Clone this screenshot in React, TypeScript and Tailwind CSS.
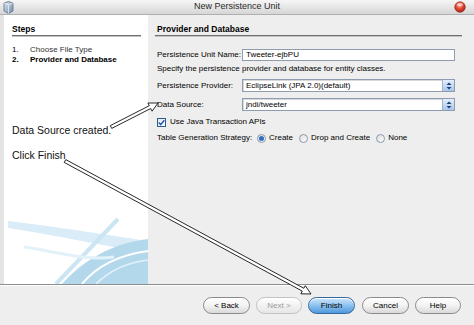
import React from "react";

type Pt = [number, number];

// Outline ("hollow") arrow polygon from tail to tip
function hollowArrow(tail: Pt, tip: Pt, sh = 1.6, hh = 4.6, hl = 9): string {
  const dx = tip[0] - tail[0];
  const dy = tip[1] - tail[1];
  const len = Math.hypot(dx, dy);
  const ux = dx / len;
  const uy = dy / len;
  const nx = -uy;
  const ny = ux;
  const bx = tip[0] - ux * hl;
  const by = tip[1] - uy * hl;
  const pts: Pt[] = [
    [tail[0] + nx * sh, tail[1] + ny * sh],
    [bx + nx * sh, by + ny * sh],
    [bx + nx * hh, by + ny * hh],
    tip,
    [bx - nx * hh, by - ny * hh],
    [bx - nx * sh, by - ny * sh],
    [tail[0] - nx * sh, tail[1] - ny * sh],
  ];
  return pts.map((p) => `${p[0].toFixed(1)},${p[1].toFixed(1)}`).join(" ");
}

function SpinArrows() {
  return (
    <div className="h-full w-[12px] border-l border-[#9fb4cc] bg-gradient-to-b from-[#e4effb] to-[#a9c7ea] flex items-center justify-center">
      <svg width="6" height="8" viewBox="0 0 6 8">
        <path d="M3 0.5 L5.5 3 L0.5 3 Z" fill="#1d3f73" />
        <path d="M3 7.5 L5.5 5 L0.5 5 Z" fill="#1d3f73" />
      </svg>
    </div>
  );
}

function Select({ value }: { value: string }) {
  return (
    <div className="w-[213px] h-[13px] bg-white border border-[#8e9cb0] flex items-center shadow-[inset_1px_1px_0_#d8d8d8]">
      <span className="flex-1 pl-[3px] leading-[11px]">{value}</span>
      <SpinArrows />
    </div>
  );
}

function Radio({ checked }: { checked?: boolean }) {
  return (
    <span className="w-[9px] h-[9px] rounded-full border border-[#8a9aae] bg-gradient-to-br from-[#dcdcdc] to-white flex items-center justify-center">
      {checked && <span className="w-[5px] h-[5px] rounded-full bg-[#2f6fc0]" />}
    </span>
  );
}

function PillButton({
  label,
  width,
  variant = "normal",
}: {
  label: string;
  width: string;
  variant?: "normal" | "disabled" | "primary";
}) {
  const base =
    "h-[17px] rounded-full border flex items-center justify-center text-[8px] shadow-[inset_0_1px_0_#ffffff]";
  const look =
    variant === "primary"
      ? "border-[#35679f] bg-gradient-to-b from-[#cfe6fa] via-[#8cc2ef] to-[#4f98dc] text-black"
      : variant === "disabled"
      ? "border-[#c2c2c2] bg-gradient-to-b from-white to-[#e6e6e6] text-[#9a9a9a]"
      : "border-[#8a8a8a] bg-gradient-to-b from-white via-[#f3f3f3] to-[#d9d9d9] text-black";
  return <div className={`${base} ${look} ${width}`}>{label}</div>;
}

export default function App() {
  return (
    <div className="relative w-[474px] h-[325px] overflow-hidden bg-[#eeeeee] text-[8px] text-black font-['Liberation_Sans',Arial,sans-serif]">
      {/* Window title bar */}
      <div className="h-[15px] flex items-center px-[3px] bg-gradient-to-b from-[#f6f6f6] to-[#d6d6d6] border-b border-[#b0b0b0]">
        <svg width="11" height="13" viewBox="0 0 11 13">
          <defs>
            <linearGradient id="cube" x1="0" y1="0" x2="1" y2="1">
              <stop offset="0" stopColor="#dfe8f2" />
              <stop offset="1" stopColor="#6f8aa8" />
            </linearGradient>
          </defs>
          <path d="M1 2 L5.5 0.5 L10 2 L10 10 L5.5 12.5 L1 10 Z" fill="url(#cube)" stroke="#5a6f88" strokeWidth="0.8" />
          <path d="M1 2 L5.5 3.8 L10 2 M5.5 3.8 L5.5 12.5" fill="none" stroke="#f4f8fc" strokeWidth="0.7" />
        </svg>
        <span className="flex-1 text-center text-[9px] text-[#2a2a2a] pl-[6px]">New Persistence Unit</span>
        <svg width="12" height="12" viewBox="0 0 12 12" className="mr-[5px]">
          <defs>
            <radialGradient id="closeG" cx="0.45" cy="0.35" r="0.7">
              <stop offset="0" stopColor="#ffb0a4" />
              <stop offset="0.5" stopColor="#e0442f" />
              <stop offset="1" stopColor="#9c1a10" />
            </radialGradient>
          </defs>
          <circle cx="6" cy="6" r="5.3" fill="url(#closeG)" stroke="#8a2a20" strokeWidth="0.6" />
          <ellipse cx="6" cy="3.6" rx="3" ry="1.6" fill="#ffffff" opacity="0.55" />
        </svg>
      </div>

      {/* Body */}
      <div className="flex h-[269px] pl-[4px] bg-[#e4e4e4]">
        {/* Steps panel */}
        <div className="w-[144px] bg-white flex flex-col">
          <div className="pt-[9px] pl-[8px] pr-[7px]">
            <div className="font-bold text-[8.5px] leading-[10px]">Steps</div>
            <div className="mt-[1px] h-[2px] border-t border-[#6f6f6f] bg-[#c4c4c4]" />
          </div>
          <div className="mt-[8px] pl-[8px] leading-[10px] text-[8px]">
            <div className="flex">
              <span className="w-[18px]">1.</span>
              <span className="text-[#333]">Choose File Type</span>
            </div>
            <div className="flex font-bold">
              <span className="w-[18px]">2.</span>
              <span>Provider and Database</span>
            </div>
          </div>
          <svg className="mt-auto block" width="144" height="73" viewBox="0 0 144 73">
            <path d="M4 10 C40 14 90 22 144 30 L144 42 C90 33 40 22 4 17 Z" fill="#d9ecf7" />
            <path d="M58 73 C78 50 108 32 144 28 L144 73 Z" fill="#b3d8ec" />
            <path d="M78 73 C92 56 114 44 144 40" fill="none" stroke="#ffffff" strokeWidth="2" />
            <path d="M92 73 C104 61 120 52 144 49" fill="none" stroke="#e3f2fa" strokeWidth="1.5" />
            <path d="M114 8 L52 73" stroke="#cbe5f3" strokeWidth="4" />
            <path d="M20 36 C50 40 80 50 110 46" fill="none" stroke="#e3f1f9" strokeWidth="3" />
          </svg>
        </div>

        {/* Provider and Database panel */}
        <div className="flex-1 bg-[#eeeeee] flex flex-col pl-[7px] pr-[12px] pt-[9px]">
          <div className="font-bold text-[8.5px] leading-[10px] pl-[2px]">Provider and Database</div>
          <div className="mt-[1px] h-[2px] border-t border-[#6f6f6f] bg-[#c4c4c4]" />

          <div className="pl-[2px] flex flex-col">
            <div className="mt-[12px] flex items-center h-[12px]">
              <span className="w-[85px]">Persistence Unit Name:</span>
              <div className="w-[213px] h-[12px] bg-white border border-[#8e9cb0] pl-[3px] leading-[10px]">
                Tweeter-ejbPU
              </div>
            </div>
            <div className="mt-[3px] leading-[10px]">
              Specify the persistence provider and database for entity classes.
            </div>
            <div className="mt-[5px] flex items-center">
              <span className="w-[85px]">Persistence Provider:</span>
              <Select value="EclipseLink (JPA 2.0)(default)" />
            </div>
            <div className="mt-[6px] flex items-center">
              <span className="w-[85px]">Data Source:</span>
              <Select value="jndi/tweeter" />
            </div>
            <div className="mt-[6px] flex items-center h-[10px] gap-[4px]">
              <span className="w-[9px] h-[9px] border border-[#2a5b8c] bg-gradient-to-br from-[#e6e6e6] to-white flex items-center justify-center">
                <svg width="7" height="7" viewBox="0 0 7 7">
                  <path d="M0.8 3.6 L2.7 5.6 L6.3 1.2" fill="none" stroke="#1f57b5" strokeWidth="1.5" />
                </svg>
              </span>
              <span>Use Java Transaction APIs</span>
            </div>
            <div className="mt-[6px] flex items-center h-[10px]">
              <span className="w-[100px]">Table Generation Strategy:</span>
              <Radio checked />
              <span className="ml-[3px] mr-[6px]">Create</span>
              <Radio />
              <span className="ml-[3px] mr-[6px]">Drop and Create</span>
              <Radio />
              <span className="ml-[3px]">None</span>
            </div>
          </div>
        </div>
      </div>

      {/* Footer with buttons */}
      <div className="h-[41px] border-t border-[#8d8d8d] shadow-[inset_0_1px_0_#ffffff] bg-[#eeeeee] flex justify-end items-start pt-[12px] pr-[13px]">
        <PillButton label="< Back" width="w-[47px]" />
        <div className="w-[6px]" />
        <PillButton label="Next >" width="w-[46px]" variant="disabled" />
        <div className="w-[6px]" />
        <PillButton label="Finish" width="w-[47px]" variant="primary" />
        <div className="w-[7px]" />
        <PillButton label="Cancel" width="w-[47px]" />
        <div className="w-[6px]" />
        <PillButton label="Help" width="w-[46px]" />
      </div>

      {/* Tutorial callouts drawn over the dialog */}
      <div className="absolute left-[12px] top-[124px] text-[10.5px] leading-[13px] text-[#111] font-['Liberation_Sans',Arial,sans-serif]">
        Data Source created.
      </div>
      <div className="absolute left-[12px] top-[149px] text-[10.5px] leading-[13px] text-[#111] font-['Liberation_Sans',Arial,sans-serif]">
        Click Finish
      </div>
      <svg className="absolute inset-0 pointer-events-none" width="474" height="325" viewBox="0 0 474 325">
        <polygon points={hollowArrow([111, 127], [158, 103])} fill="#ffffff" stroke="#111" strokeWidth="0.9" strokeLinejoin="miter" />
        <polygon points={hollowArrow([65, 161], [311, 294])} fill="#ffffff" stroke="#111" strokeWidth="0.9" strokeLinejoin="miter" />
      </svg>
    </div>
  );
}
